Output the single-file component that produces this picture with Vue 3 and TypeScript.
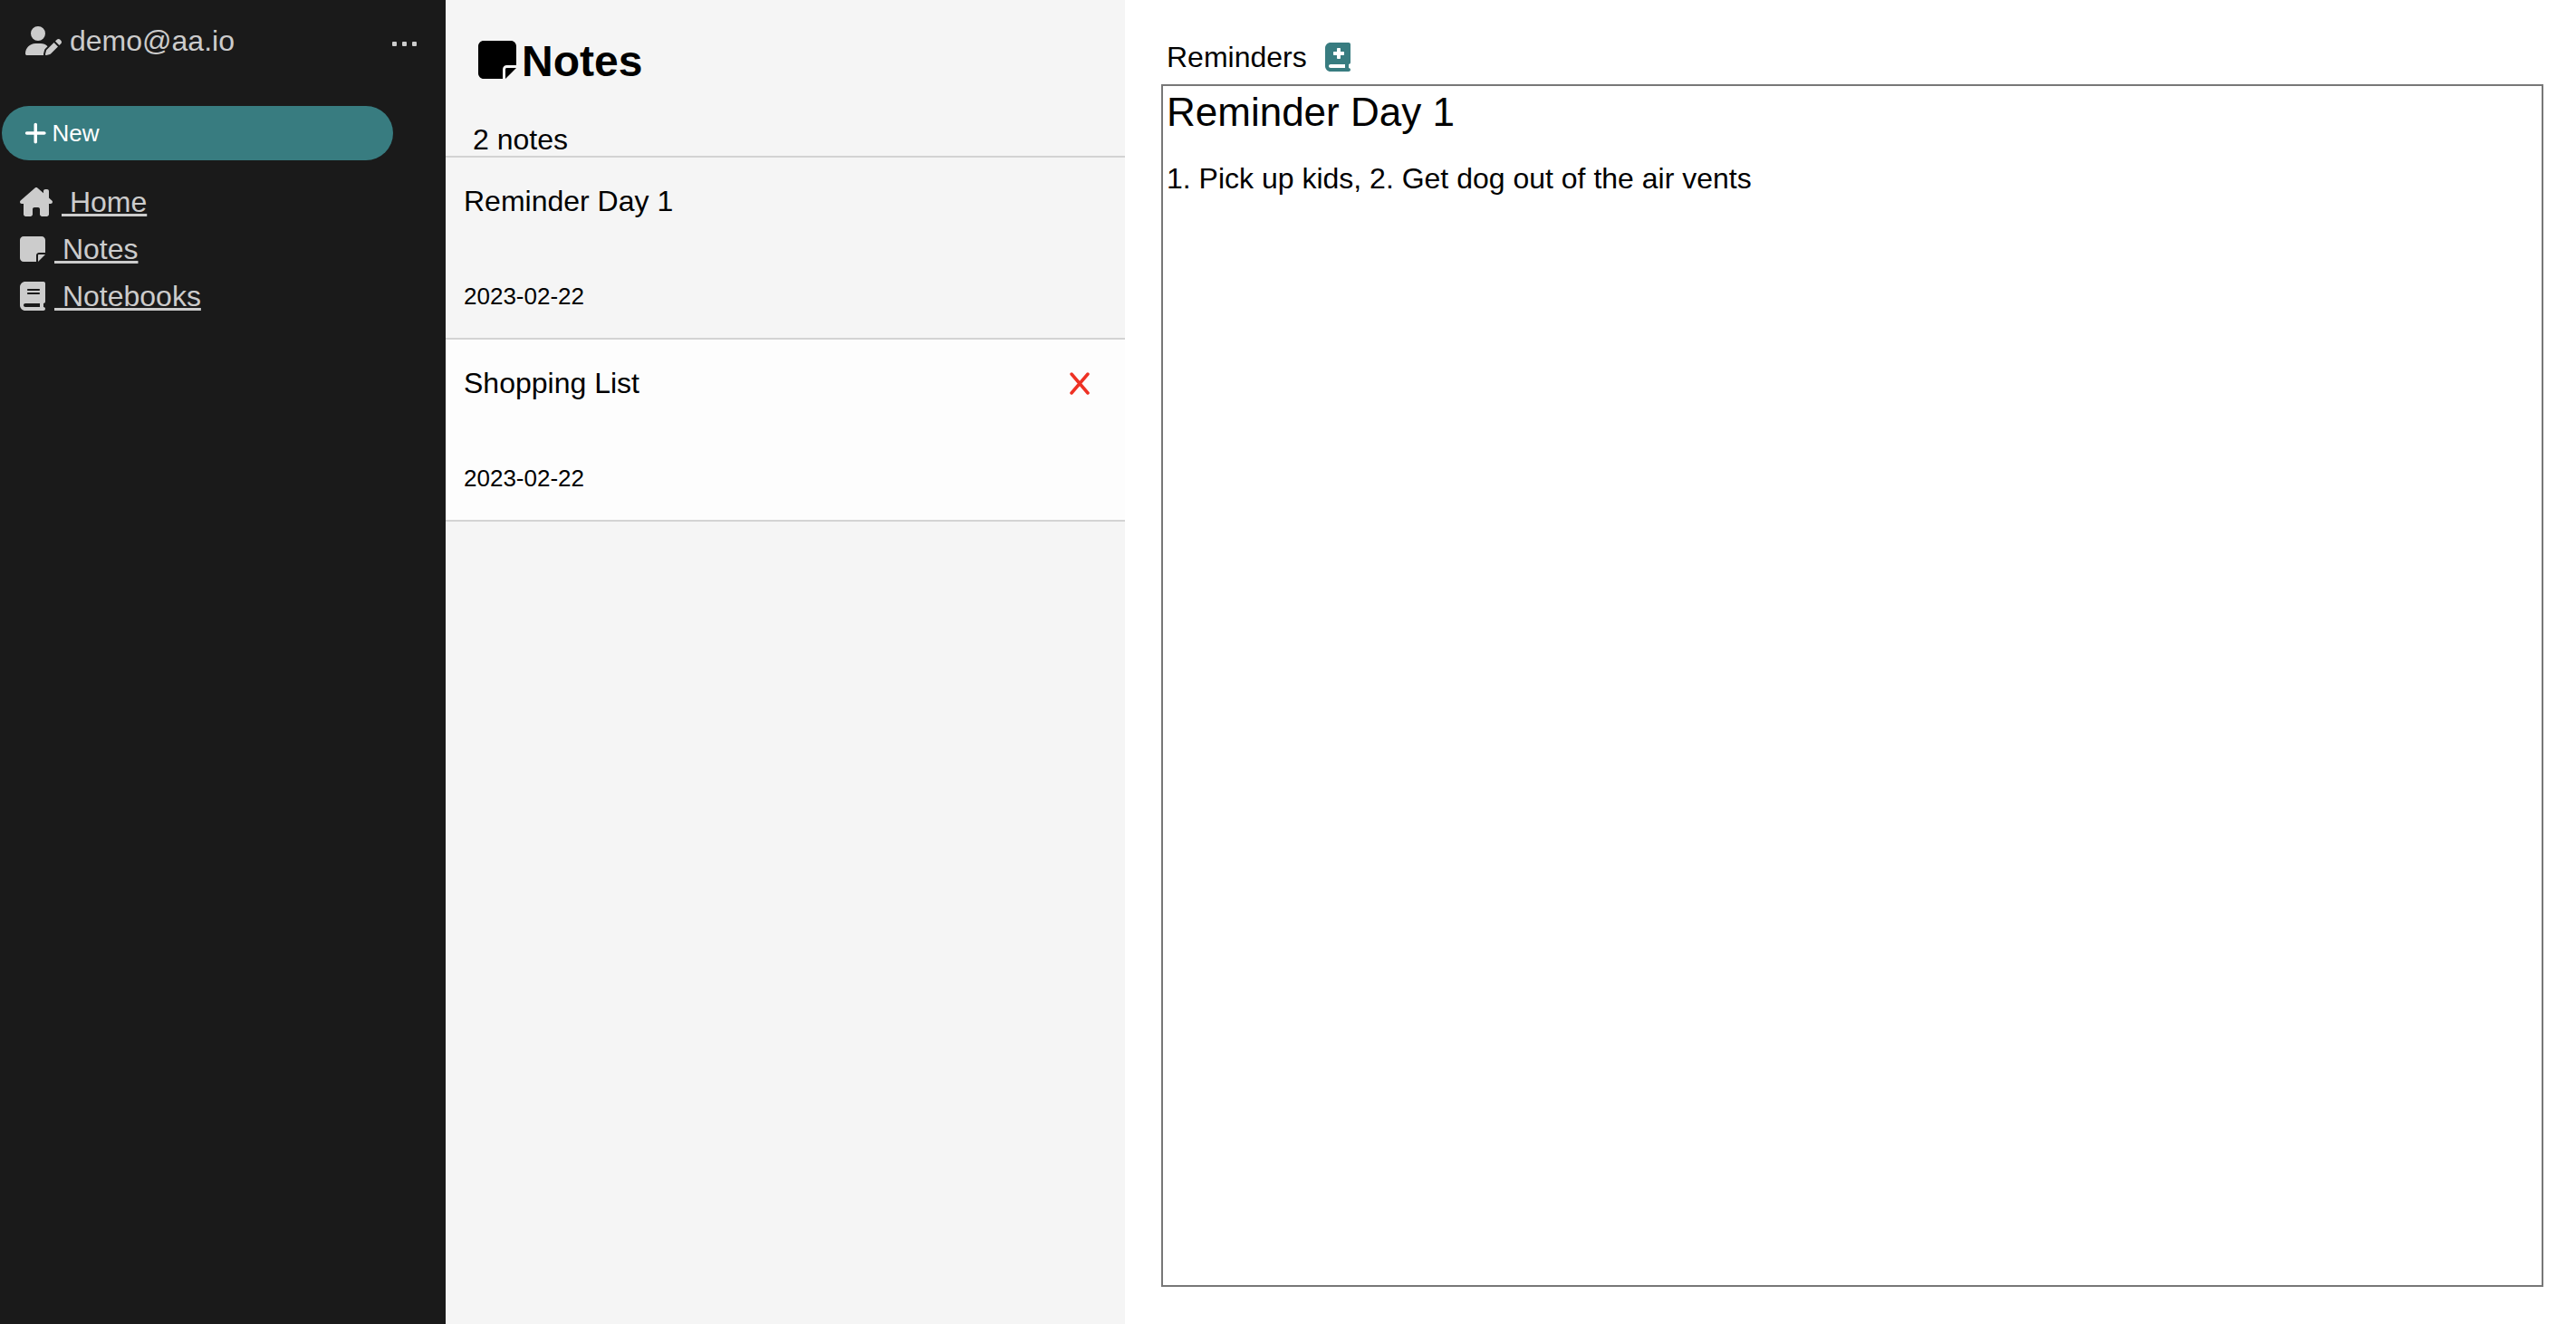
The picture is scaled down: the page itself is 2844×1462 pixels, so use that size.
<script setup lang="ts">
import { ref } from 'vue';

interface Note {
  id: number;
  title: string;
  date: string;
}

const paths = {
  userPen:
    'M224 256A128 128 0 1 0 224 0a128 128 0 1 0 0 256zm-45.7 48C79.8 304 0 383.8 0 482.3C0 498.7 13.3 512 29.7 512H322.8c-3.1-8.8-3.7-18.4-1.4-27.8l15-60.1c2.8-11.3 8.6-21.5 16.8-29.7l40.3-40.3c-32.1-31-75.7-50.1-123.9-50.1H178.3zm435.5-68.3c-15.6-15.6-40.9-15.6-56.6 0l-29.4 29.4 71 71 29.4-29.4c15.6-15.6 15.6-40.9 0-56.6l-14.4-14.4zM375.9 417c-4.1 4.1-7 9.2-8.4 14.9l-15 60.1c-1.4 5.5 .2 11.2 4.2 15.2s9.7 5.6 15.2 4.2l60.1-15c5.6-1.4 10.8-4.3 14.9-8.4L576.1 358.7l-71-71L375.9 417z',
  plus: 'M256 80c0-17.7-14.3-32-32-32s-32 14.3-32 32V224H48c-17.7 0-32 14.3-32 32s14.3 32 32 32H192V432c0 17.7 14.3 32 32 32s32-14.3 32-32V288H400c17.7 0 32-14.3 32-32s-14.3-32-32-32H256V80z',
  home: 'M543.8 287.6c17 0 32-14 32-32.1c1-9-3-17-11-24L512 185V64c0-17.7-14.3-32-32-32H448c-17.7 0-32 14.3-32 32v36.7L309.5 7c-6-5-14-7-21-7s-15 1-22 8L10 231.5c-7 7-10 15-10 24c0 18 14 32.1 32 32.1h32v69.7c-.1 .9-.1 1.8-.1 2.8V472c0 22.1 17.9 40 40 40h16c1.2 0 2.4-.1 3.6-.2c1.5 .1 3 .2 4.5 .2H160h24c22.1 0 40-17.9 40-40V448 384c0-17.7 14.3-32 32-32h64c17.7 0 32 14.3 32 32v64 24c0 22.1 17.9 40 40 40h24 32.5c1.4 0 2.8 0 4.2-.1c1.1 .1 2.2 .1 3.3 .1h16c22.1 0 40-17.9 40-40V455.8c.3-2.6 .5-5.3 .5-8.1l-.7-160.2h32z',
  note: 'M64 32C28.7 32 0 60.7 0 96V416c0 35.3 28.7 64 64 64H288V368c0-26.5 21.5-48 48-48H448V96c0-35.3-28.7-64-64-64H64zM448 352H402.7 336c-8.8 0-16 7.2-16 16v66.7V480l32-32 64-64 32-32z',
  book: 'M96 0C43 0 0 43 0 96V416c0 53 43 96 96 96H384h32c17.7 0 32-14.3 32-32s-14.3-32-32-32V384c17.7 0 32-14.3 32-32V32c0-17.7-14.3-32-32-32H384 96zm0 384H352v64H96c-17.7 0-32-14.3-32-32s14.3-32 32-32zm32-240c0-8.8 7.2-16 16-16H336c8.8 0 16 7.2 16 16s-7.2 16-16 16H144c-8.8 0-16-7.2-16-16zm16 48H336c8.8 0 16 7.2 16 16s-7.2 16-16 16H144c-8.8 0-16-7.2-16-16s7.2-16 16-16z',
  bookMedical:
    'M0 96C0 43 43 0 96 0H384h32c17.7 0 32 14.3 32 32V352c0 17.7-14.3 32-32 32v64c17.7 0 32 14.3 32 32s-14.3 32-32 32H384 96c-53 0-96-43-96-96V96zM64 416c0 17.7 14.3 32 32 32H352V384H96c-17.7 0-32 14.3-32 32zM208 112v48H160c-8.8 0-16 7.2-16 16v32c0 8.8 7.2 16 16 16h48v48c0 8.8 7.2 16 16 16h32c8.8 0 16-7.2 16-16V224h48c8.8 0 16-7.2 16-16V176c0-8.8-7.2-16-16-16H272V112c0-8.8-7.2-16-16-16H224c-8.8 0-16 7.2-16 16z',
};

const navLinks = [
  { label: 'Home', path: paths.home, viewBox: '0 0 576 512', width: 36 },
  { label: 'Notes', path: paths.note, viewBox: '0 0 448 512', width: 28 },
  { label: 'Notebooks', path: paths.book, viewBox: '0 0 448 512', width: 28 },
];

const notes: Note[] = [
  { id: 1, title: 'Reminder Day 1', date: '2023-02-22' },
  { id: 2, title: 'Shopping List', date: '2023-02-22' },
];

// second row is the hovered one in the screenshot
const hoveredId = ref(2);
</script>

<template>
  <div class="app">
    <aside class="sidebar">
      <div class="user-row">
        <svg class="user-icon" viewBox="0 0 640 512"><path :d="paths.userPen" /></svg>
        <span class="user-name">demo@aa.io</span>
        <span class="more"><i></i><i></i><i></i></span>
      </div>
      <button class="new-btn" type="button">
        <svg class="plus-icon" viewBox="0 0 448 512"><path :d="paths.plus" /></svg>
        <span>New</span>
      </button>
      <nav class="nav">
        <div v-for="link in navLinks" :key="link.label" class="nav-item">
          <svg class="nav-icon" :viewBox="link.viewBox" :width="link.width" height="32"><path :d="link.path" /></svg>
          <a href="#" class="nav-link">&nbsp;{{ link.label }}</a>
        </div>
      </nav>
    </aside>

    <section class="notes-panel">
      <h1 class="notes-title">
        <svg class="title-icon" viewBox="0 0 448 512"><path :d="paths.note" /></svg>
        <span class="title-text">Notes</span>
      </h1>
      <div class="notes-count">2 notes</div>
      <div
        v-for="note in notes"
        :key="note.id"
        class="note-row"
        :class="{ hovered: note.id === hoveredId }"
      >
        <div class="note-top">
          <span>{{ note.title }}</span>
          <svg v-if="note.id === hoveredId" class="delete-icon" viewBox="0 0 22 25">
            <path d="M2 2 20 23M20 2 2 23" />
          </svg>
        </div>
        <div class="note-date">{{ note.date }}</div>
      </div>
    </section>

    <main class="editor">
      <div class="editor-head">
        <span>Reminders</span>
        <svg class="add-icon" viewBox="0 0 448 512"><path :d="paths.bookMedical" /></svg>
      </div>
      <div class="editor-box">
        <h2 class="editor-title">Reminder Day 1</h2>
        <p class="editor-text">1. Pick up kids, 2. Get dog out of the air vents</p>
      </div>
    </main>
  </div>
</template>

<style>
html,
body {
  margin: 0;
  background: #fff;
}
</style>

<style scoped>
.app {
  display: grid;
  grid-template-columns: 492px 750px 1fr;
  height: 1462px;
  overflow: hidden;
  font-family: "Liberation Sans", Arial, sans-serif;
  font-size: 32px;
  color: #000;
}

/* Sidebar */
.sidebar {
  background: #1a1a1a;
  color: #ccc;
  padding: 0 0 0 2px;
}

.user-row {
  display: flex;
  align-items: center;
  height: 90px;
  padding-left: 26px;
}

.user-icon {
  width: 40px;
  height: 32px;
  margin-right: 9px;
  fill: #ccc;
}

.more {
  display: flex;
  gap: 6px;
  margin-left: 174px;
  margin-top: 6px;
}

.more i {
  width: 5px;
  height: 5px;
  background: #ccc;
  border-radius: 1px;
}

.new-btn {
  display: flex;
  align-items: center;
  width: 432px;
  height: 60px;
  margin-top: 27px;
  padding: 0 0 0 25px;
  border: none;
  border-radius: 30px;
  background: #387c80;
  color: #fff;
  font-family: inherit;
  font-size: 26px;
}

.plus-icon {
  width: 24.5px;
  height: 28px;
  margin-right: 6px;
  fill: #fff;
}

.nav {
  margin-top: 20px;
  padding-left: 20px;
}

.nav-item {
  display: flex;
  align-items: center;
  height: 52px;
}

.nav-icon {
  fill: #ccc;
  margin-right: 10px;
}

.nav-link {
  color: #ccc;
  text-decoration: underline;
}

/* Notes list */
.notes-panel {
  background: #f5f5f5;
}

.notes-title {
  display: flex;
  align-items: center;
  gap: 6px;
  height: 48px;
  margin: 0;
  padding: 42px 0 0 36px;
  font-size: 48px;
  font-weight: 700;
}

.title-icon {
  width: 42px;
  height: 48px;
  fill: #000;
}

.title-text {
  padding-top: 2px;
}

.notes-count {
  height: 84px;
  padding: 46px 0 0 30px;
  box-sizing: border-box;
  line-height: 37px;
  border-bottom: 2px solid #d3d3d3;
}

.note-row {
  box-sizing: border-box;
  height: 201px;
  padding: 30px 20px 0 20px;
  border-bottom: 2px solid #d3d3d3;
}

.note-row.hovered {
  background: #fdfdfd;
}

.note-top {
  display: flex;
  justify-content: space-between;
  align-items: center;
  height: 37px;
}

.delete-icon {
  width: 22px;
  height: 25px;
  margin-right: 19px;
  fill: none;
  stroke: #ee3124;
  stroke-width: 3.5;
  stroke-linecap: round;
}

.note-date {
  margin-top: 71px;
  font-size: 26px;
}

/* Editor */
.editor {
  padding: 0 36px 0 40px;
  background: #fff;
}

.editor-head {
  display: flex;
  align-items: center;
  height: 93px;
  padding: 33px 0 0 6px;
  box-sizing: border-box;
}

.add-icon {
  width: 28px;
  height: 32px;
  margin-left: 20px;
  fill: #387c80;
}

.editor-box {
  box-sizing: border-box;
  height: 1328px;
  padding: 4px 4px;
  border: 2px solid #777;
}

.editor-title {
  margin: 0;
  font-size: 44px;
  font-weight: 400;
  line-height: 50px;
}

.editor-text {
  margin: 30px 0 0;
  line-height: 37px;
}
</style>
